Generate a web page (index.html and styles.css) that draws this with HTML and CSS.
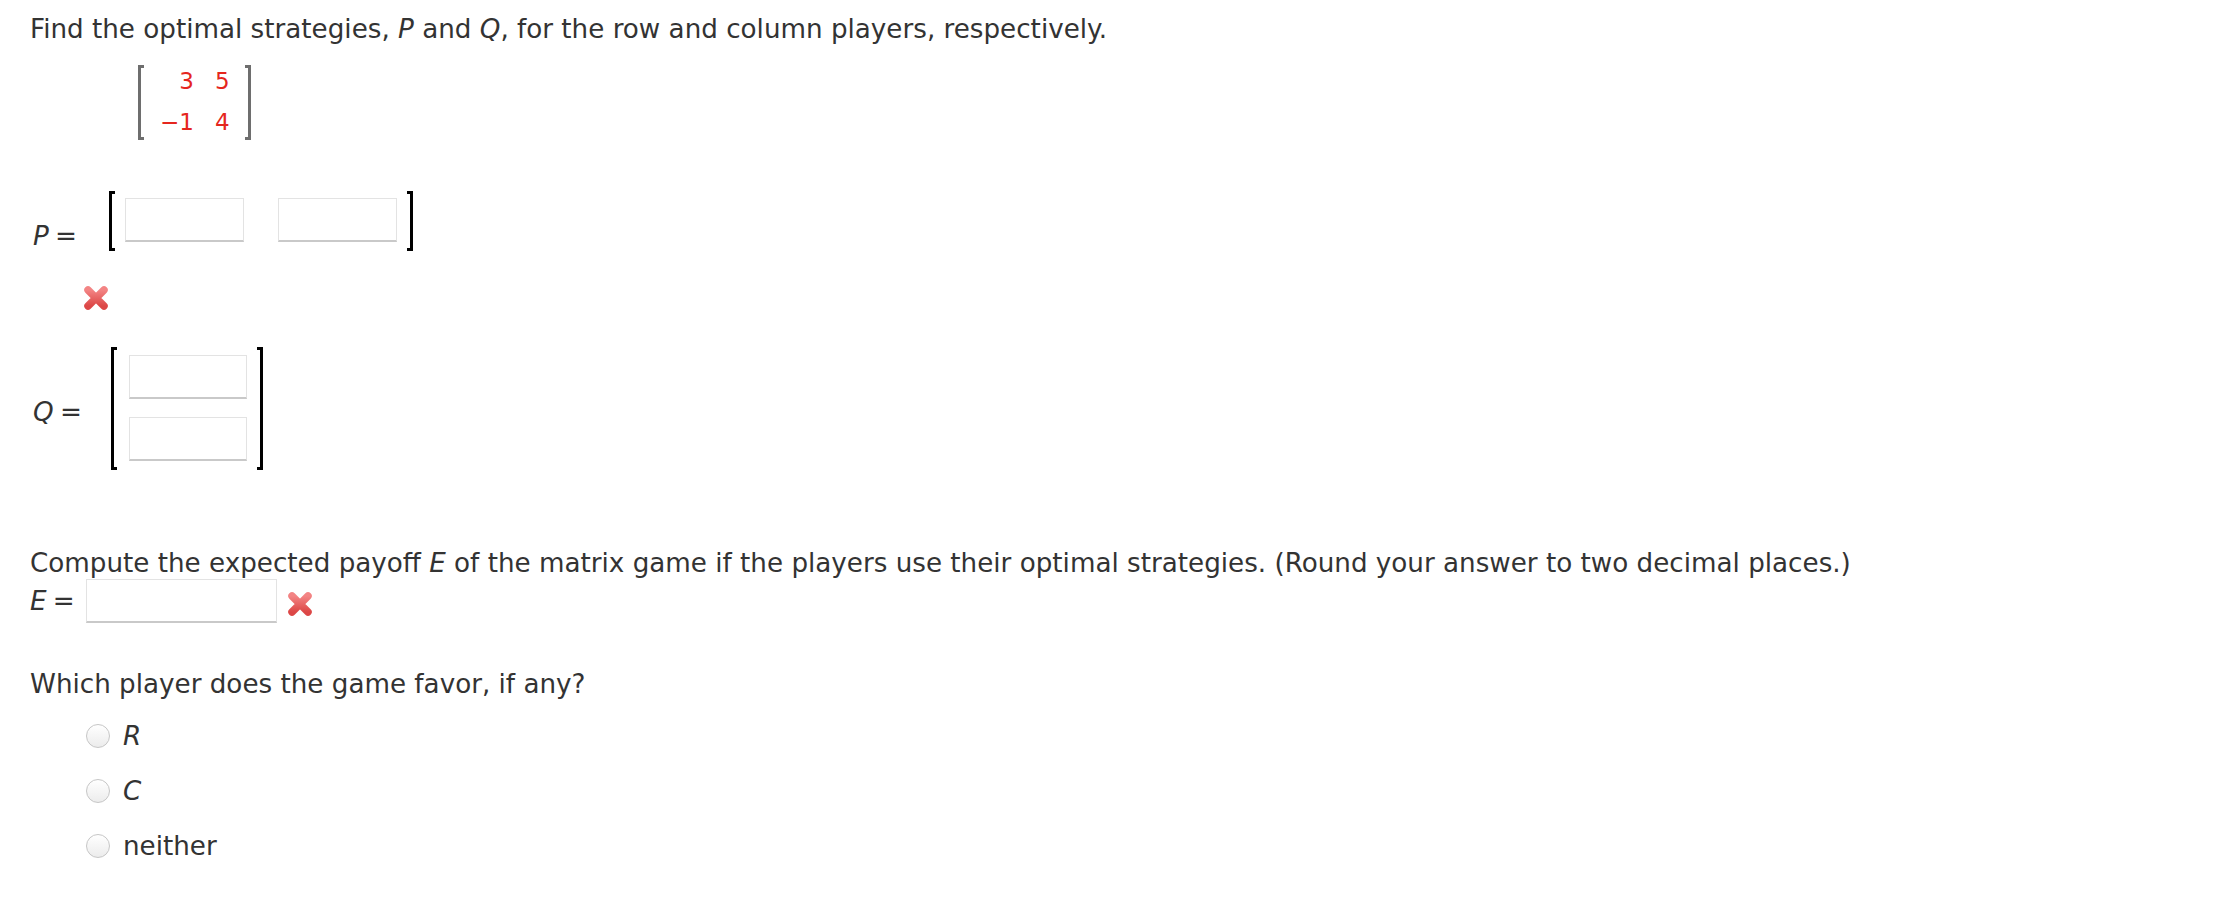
FILE: index.html
```html
<!DOCTYPE html>
<html lang="en">
<head>
<meta charset="utf-8">
<title>Matrix game</title>
<link rel="stylesheet" href="styles.css">
</head>
<body>
<div class="page">
  <p class="prompt first">Find the optimal strategies, <i>P</i> and <i>Q</i>, for the row and column players, respectively.</p>

  <div class="given">
    <span class="gbr gbr-left"></span>
    <div class="gcells">
      <span>3</span><span>5</span>
      <span>&minus;1</span><span>4</span>
    </div>
    <span class="gbr gbr-right"></span>
  </div>

  <div class="mrow prow">
    <span class="label label-p"><i>P</i> =</span>
    <div class="bmatrix">
      <span class="br br-left"></span>
      <div class="cells cells-h">
        <input class="box box-p" type="text" aria-label="P1">
        <input class="box box-p" type="text" aria-label="P2">
      </div>
      <span class="br br-right"></span>
    </div>
  </div>

  <div class="mark mark-p">
    <svg width="26" height="26" viewBox="0 0 26 26" aria-hidden="true">
      <defs>
        <linearGradient id="xg1" x1="0" y1="0" x2="0" y2="1">
          <stop offset="0" stop-color="#f38484"/>
          <stop offset="1" stop-color="#dc4746"/>
        </linearGradient>
      </defs>
      <path d="M5 5 L21 21 M21 5 L5 21" stroke="url(#xg1)" stroke-width="7.5" stroke-linecap="round" fill="none"/>
    </svg>
  </div>

  <div class="mrow qrow">
    <span class="label label-q"><i>Q</i> =</span>
    <div class="bmatrix">
      <span class="br br-left"></span>
      <div class="cells cells-v">
        <input class="box box-q" type="text" aria-label="Q1">
        <input class="box box-q" type="text" aria-label="Q2">
      </div>
      <span class="br br-right"></span>
    </div>
  </div>

  <p class="prompt compute">Compute the expected payoff <i>E</i> of the matrix game if the players use their optimal strategies. (Round your answer to two decimal places.)</p>
  <div class="erow">
    <span class="label label-e"><i>E</i> =</span>
    <input class="box box-e" type="text" aria-label="E">
    <svg class="mark-e" width="26" height="26" viewBox="0 0 26 26" aria-hidden="true">
      <defs>
        <linearGradient id="xg2" x1="0" y1="0" x2="0" y2="1">
          <stop offset="0" stop-color="#f38484"/>
          <stop offset="1" stop-color="#dc4746"/>
        </linearGradient>
      </defs>
      <path d="M5 5 L21 21 M21 5 L5 21" stroke="url(#xg2)" stroke-width="7.5" stroke-linecap="round" fill="none"/>
    </svg>
  </div>

  <p class="prompt which">Which player does the game favor, if any?</p>
  <div class="choices">
    <label class="choice"><span class="radio"></span><i>R</i></label>
    <label class="choice"><span class="radio"></span><i>C</i></label>
    <label class="choice"><span class="radio"></span>neither</label>
  </div>
</div>
</body>
</html>
```

FILE: styles.css
```css
html, body {
  margin: 0;
  padding: 0;
  background: #ffffff;
}

.page {
  padding: 14px 0 0 30px;
  font-family: "DejaVu Sans", Verdana, sans-serif;
  font-size: 26.2px;
  color: #333333;
}

.page i {
  font-style: italic;
}

.prompt {
  margin: 0;
  line-height: 30px;
}

/* given matrix */
.given {
  display: flex;
  margin: 21px 0 0 108px;
  width: max-content;
  height: 75px;
}

.gbr {
  width: 3px;
  border: 3px solid #6e6e6e;
}

.gbr-left {
  border-right: none;
}

.gbr-right {
  border-left: none;
}

.gcells {
  display: grid;
  grid-template-columns: auto auto;
  grid-auto-rows: 30px;
  row-gap: 11px;
  column-gap: 21px;
  padding: 1px 15px 3px 16px;
  font-size: 23px;
  line-height: 30px;
  color: #e5261e;
  text-align: right;
}

/* bracketed input matrices */
.mrow {
  display: flex;
  align-items: stretch;
}

.prow {
  margin-top: 51px;
}

.qrow {
  margin-top: 36px;
}

.label {
  line-height: 30px;
  white-space: nowrap;
  word-spacing: -2px;
}

.label-p {
  margin: 0 32px 0 3px;
  align-self: flex-end;
}

.label-q {
  margin: 7px 29px 0 3px;
  align-self: center;
}

.bmatrix {
  display: flex;
}

.br {
  width: 3px;
  border: 3px solid #000000;
}

.br-left {
  border-right: none;
}

.br-right {
  border-left: none;
}

.cells {
  display: flex;
  padding: 7px 10px 9px;
}

.cells-h {
  gap: 34px;
}

.cells-v {
  flex-direction: column;
  gap: 18px;
  padding: 8px 10px 9px 12px;
}

.box {
  box-sizing: border-box;
  margin: 0;
  height: 44px;
  border: 1px solid #e3e3e3;
  border-bottom: 2px solid #c9c9c9;
  border-radius: 0;
  background: #ffffff;
  font: inherit;
  padding: 0 6px;
  outline: none;
}

.box-p {
  width: 119px;
}

.box-q {
  width: 118px;
}

.box-e {
  width: 191px;
}

.mark {
  height: 26px;
}

.mark-p {
  margin: 34px 0 0 53px;
}

.mark svg,
.mark-e {
  display: block;
}

.compute {
  margin-top: 78px;
}

.erow {
  display: flex;
  align-items: center;
  height: 44px;
  margin-top: 1px;
}

.label-e {
  margin-right: 11px;
}

.mark-e {
  margin-left: 10px;
  margin-top: 6px;
}

.which {
  margin-top: 46px;
}

.choices {
  display: flex;
  flex-direction: column;
  gap: 15px;
  margin: 17px 0 0 56px;
}

.choice {
  display: flex;
  align-items: center;
  height: 40px;
  line-height: 30px;
  gap: 13px;
}

.radio {
  box-sizing: border-box;
  width: 24px;
  height: 24px;
  border-radius: 50%;
  border: 1px solid #c6c6c6;
  background: linear-gradient(#ffffff, #ececec);
}
```
